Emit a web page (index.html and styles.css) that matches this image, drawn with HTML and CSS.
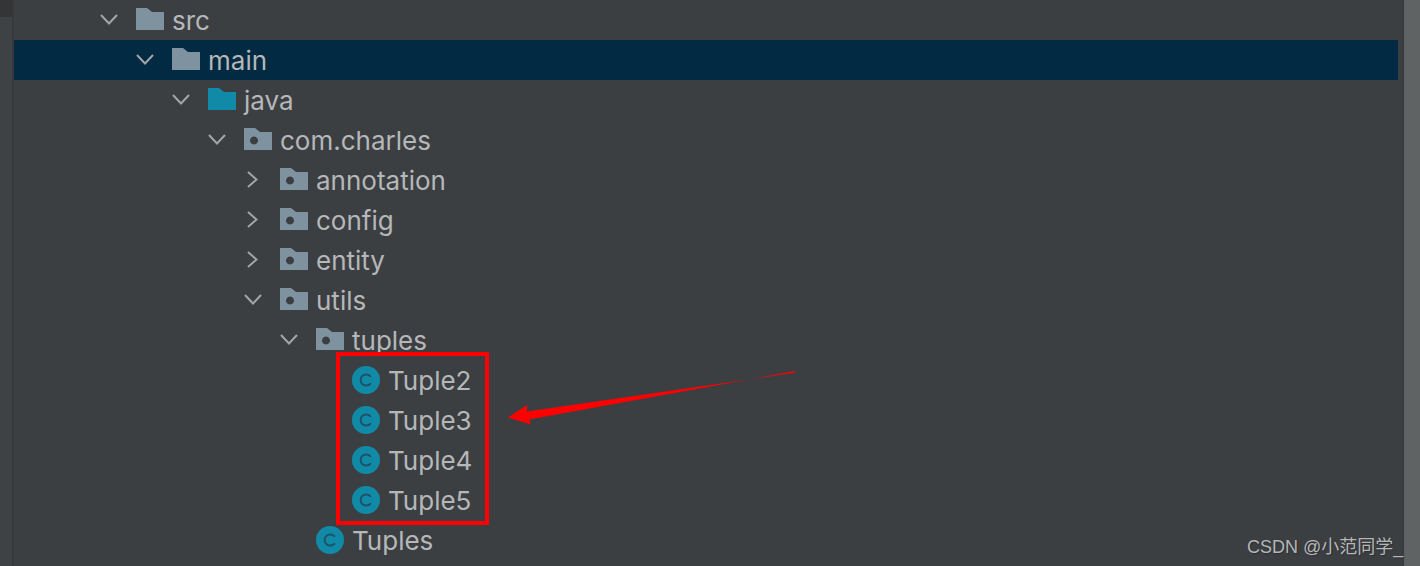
FILE: index.html
```html
<!DOCTYPE html>
<html lang="en">
<head>
  <meta charset="UTF-8">
  <title>Project tree</title>
  <link rel="stylesheet" href="styles.css">
</head>
<body>
  <svg class="defs" width="0" height="0">
    <defs>
      <symbol id="down" viewBox="0 0 18 11"><path d="M1 1L9 9.5L17 1" fill="none" stroke="currentColor" stroke-width="2"/></symbol>
      <symbol id="right" viewBox="0 0 11 17"><path d="M1 1L9.5 8.5L1 16" fill="none" stroke="currentColor" stroke-width="2"/></symbol>
      <symbol id="folder" viewBox="0 0 28 22"><path d="M0 0H11L16 4H28V22H0Z" fill="currentColor"/></symbol>
      <symbol id="package" viewBox="0 0 28 22"><path fill-rule="evenodd" d="M0 0H11L16 4H28V22H0ZM10 8.5a4 4 0 1 0 0.01 0Z" fill="currentColor"/></symbol>
      <symbol id="class" viewBox="0 0 28 28"><circle cx="14" cy="14" r="14" fill="#118aa8"/><path d="M18.8 10.8A5.6 5.6 0 1 0 18.8 17.2" fill="none" stroke="#1d5269" stroke-width="2"/></symbol>
    </defs>
  </svg>

  <div class="window">
    <div class="side-strip"><div class="side-tab"></div></div>

    <div class="tree">
      <div class="row lvl-0">
        <span class="arrow"><svg class="chev-down"><use href="#down"/></svg></span>
        <svg class="folder"><use href="#folder"/></svg>
        <span class="name">src</span>
      </div>
      <div class="row lvl-1 selected">
        <span class="arrow"><svg class="chev-down"><use href="#down"/></svg></span>
        <svg class="folder"><use href="#folder"/></svg>
        <span class="name">main</span>
      </div>
      <div class="row lvl-2">
        <span class="arrow"><svg class="chev-down"><use href="#down"/></svg></span>
        <svg class="folder source"><use href="#folder"/></svg>
        <span class="name">java</span>
      </div>
      <div class="row lvl-3">
        <span class="arrow"><svg class="chev-down"><use href="#down"/></svg></span>
        <svg class="folder"><use href="#package"/></svg>
        <span class="name">com.charles</span>
      </div>
      <div class="row lvl-4">
        <span class="arrow"><svg class="chev-right"><use href="#right"/></svg></span>
        <svg class="folder"><use href="#package"/></svg>
        <span class="name">annotation</span>
      </div>
      <div class="row lvl-4">
        <span class="arrow"><svg class="chev-right"><use href="#right"/></svg></span>
        <svg class="folder"><use href="#package"/></svg>
        <span class="name">config</span>
      </div>
      <div class="row lvl-4">
        <span class="arrow"><svg class="chev-right"><use href="#right"/></svg></span>
        <svg class="folder"><use href="#package"/></svg>
        <span class="name">entity</span>
      </div>
      <div class="row lvl-4">
        <span class="arrow"><svg class="chev-down"><use href="#down"/></svg></span>
        <svg class="folder"><use href="#package"/></svg>
        <span class="name">utils</span>
      </div>
      <div class="row lvl-5">
        <span class="arrow"><svg class="chev-down"><use href="#down"/></svg></span>
        <svg class="folder"><use href="#package"/></svg>
        <span class="name">tuples</span>
      </div>
      <div class="row lvl-6">
        <span class="arrow"></span>
        <svg class="class-icon"><use href="#class"/></svg>
        <span class="name">Tuple2</span>
      </div>
      <div class="row lvl-6">
        <span class="arrow"></span>
        <svg class="class-icon"><use href="#class"/></svg>
        <span class="name">Tuple3</span>
      </div>
      <div class="row lvl-6">
        <span class="arrow"></span>
        <svg class="class-icon"><use href="#class"/></svg>
        <span class="name">Tuple4</span>
      </div>
      <div class="row lvl-6">
        <span class="arrow"></span>
        <svg class="class-icon"><use href="#class"/></svg>
        <span class="name">Tuple5</span>
      </div>
      <div class="row lvl-5">
        <span class="arrow"></span>
        <svg class="class-icon"><use href="#class"/></svg>
        <span class="name">Tuples</span>
      </div>
    </div>

    <div class="gutter"></div>
    <div class="scrollbar"></div>
  </div>

  <!-- red markup on top of the screenshot -->
  <div class="mark-box"></div>
  <svg class="mark-arrow" width="300" height="60" viewBox="500 365 300 60">
    <path d="M795 371L795 372.8L527 411.5L527 405L508 417.5L531 424.5L529 419.5Z" fill="#fe0000"/>
  </svg>
  <div class="watermark">CSDN @小范同学_</div>
</body>
</html>
```

FILE: styles.css
```css
body {
  margin: 0;
  padding: 0;
  background-color: #3c3f42;
  overflow: hidden;
}

.defs {
  position: absolute;
}

.window {
  display: flex;
  height: 566px;
}

.side-strip {
  width: 12px;
  border-right: 2px solid #36383a;
  background-color: #3f4244;
}

.side-tab {
  height: 17px;
  background-color: #333537;
}

.tree {
  flex: 1;
  font-family: Inter, "Liberation Sans", sans-serif;
  font-size: 26px;
  color: #b5b7b9;
}

.gutter {
  width: 5px;
  border-right: 1px solid #37393b;
}

.scrollbar {
  width: 16px;
  background-color: #5f6363;
}

.row {
  display: flex;
  align-items: center;
  height: 40px;
}

.selected {
  background-color: #022a42;
}

.lvl-0 { padding-left: 83px; }
.lvl-1 { padding-left: 119px; }
.lvl-2 { padding-left: 155px; }
.lvl-3 { padding-left: 191px; }
.lvl-4 { padding-left: 227px; }
.lvl-5 { padding-left: 263px; }
.lvl-6 { padding-left: 299px; }

.arrow {
  display: flex;
  justify-content: center;
  width: 24px;
  margin-right: 15px;
  color: #a3a6a8;
}

.chev-down {
  width: 18px;
  height: 11px;
  margin-top: -2px;
}

.chev-right {
  width: 11px;
  height: 17px;
  margin-top: -2px;
  margin-left: -2px;
}

.folder {
  width: 28px;
  height: 22px;
  margin-top: -2px;
  margin-right: 8px;
  color: #7f929f;
}

.source {
  color: #118aa8;
}

.class-icon {
  width: 28px;
  height: 28px;
  margin-right: 8px;
}

.name {
  padding-top: 2px;
  line-height: 40px;
}

.mark-box {
  position: absolute;
  left: 336px;
  top: 352px;
  width: 145px;
  height: 165px;
  border: 4px solid #fe0000;
}

.mark-arrow {
  position: absolute;
  left: 500px;
  top: 365px;
}

.watermark {
  position: absolute;
  left: 1247px;
  top: 535px;
  font-family: "Liberation Sans", "Noto Sans CJK SC", sans-serif;
  font-size: 18px;
  line-height: 24px;
  color: #b4b6b7;
  text-shadow: 1px 1px 1px #2c2e30;
  white-space: nowrap;
}
```
